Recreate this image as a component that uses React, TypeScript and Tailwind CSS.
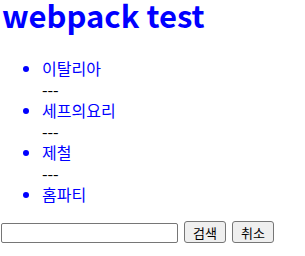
export default function App() {
  const items = ["이탈리아", "세프의요리", "제철", "홈파티"];
  return (
    <div className="pl-[1px] bg-white text-black">
      <div className="h-[58px] pl-[1px]">
        <h1 className="text-[31px] leading-[30px] font-bold text-[#0000ff] font-['Noto_Sans_CJK_KR','Noto_Sans',sans-serif]">
          webpack test
        </h1>
      </div>
      <ul className="pl-[41px] list-disc text-[16px] leading-[21px] font-['Noto_Sans_CJK_KR',sans-serif]">
        {items.map((it, i) => (
          <li key={it} className="text-[#0000ff] marker:text-[#0000ff]">
            <div>{it}</div>
            {i < items.length - 1 && <div className="text-black">---</div>}
          </li>
        ))}
      </ul>
      <div className="mt-[16px] flex items-end gap-[6px] font-['Noto_Sans_CJK_KR',sans-serif]">
        <input className="w-[177px] h-[20px] border border-[#767676] rounded-[2px] text-[13px] px-1" />
        <button className="w-[42px] h-[22px] text-[13px] leading-none bg-[#efefef] border border-[#767676] rounded-[3px] text-black">검색</button>
        <button className="w-[42px] h-[22px] text-[13px] leading-none bg-[#efefef] border border-[#767676] rounded-[3px] text-black">취소</button>
      </div>
    </div>
  );
}
